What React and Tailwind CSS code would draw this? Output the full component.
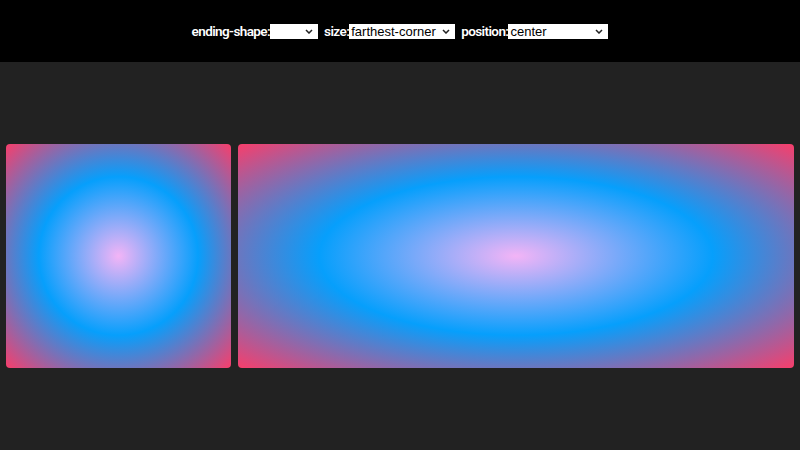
import React from "react";

const grad = "radial-gradient(farthest-corner at center, #f3b4f6, #069ffc, #f83e6b)";

function Sel({ w, options }) {
  return (
    <span className={`relative inline-flex ${w} h-[15px]`}>
      <select
        className="appearance-none bg-white text-black w-full h-full text-[13px] font-normal tracking-normal leading-[15px] pl-[2px] outline-none"
        style={{ fontFamily: "'Liberation Sans', Arial, sans-serif" }}
      >
        {options.map((o) => (
          <option key={o}>{o}</option>
        ))}
      </select>
      <svg className="absolute right-[5px] top-[5px] pointer-events-none" width="8" height="5" viewBox="0 0 8 5">
        <path d="M1 1 L4 4 L7 1" fill="none" stroke="#222" strokeWidth="1.5" />
      </svg>
    </span>
  );
}

export default function App() {
  return (
    <div className="w-[800px] h-[450px] bg-[#222222] overflow-hidden" style={{ fontFamily: "Roboto, sans-serif" }}>
      <div className="h-[62px] bg-black flex items-start justify-center text-white pt-[24px]">
        <div className="flex items-center text-[13.5px] font-semibold tracking-[-0.6px] leading-[15px]">
          <label className="flex items-center">
            <span>ending-shape:</span>
            <Sel w="w-[48px]" options={["", "circle", "ellipse"]} />
          </label>
          <label className="flex items-center ml-[6px]">
            <span>size:</span>
            <Sel w="w-[106px]" options={["farthest-corner", "closest-side", "closest-corner", "farthest-side"]} />
          </label>
          <label className="flex items-center ml-[6px]">
            <span>position:</span>
            <Sel w="w-[100px]" options={["center", "top", "left", "right", "bottom"]} />
          </label>
        </div>
      </div>
      <div className="flex gap-[7px] px-[6px] mt-[82px]">
        <div className="w-[225px] h-[224px] rounded-[4px]" style={{ background: grad }} />
        <div className="flex-1 h-[224px] rounded-[4px]" style={{ background: grad }} />
      </div>
    </div>
  );
}
